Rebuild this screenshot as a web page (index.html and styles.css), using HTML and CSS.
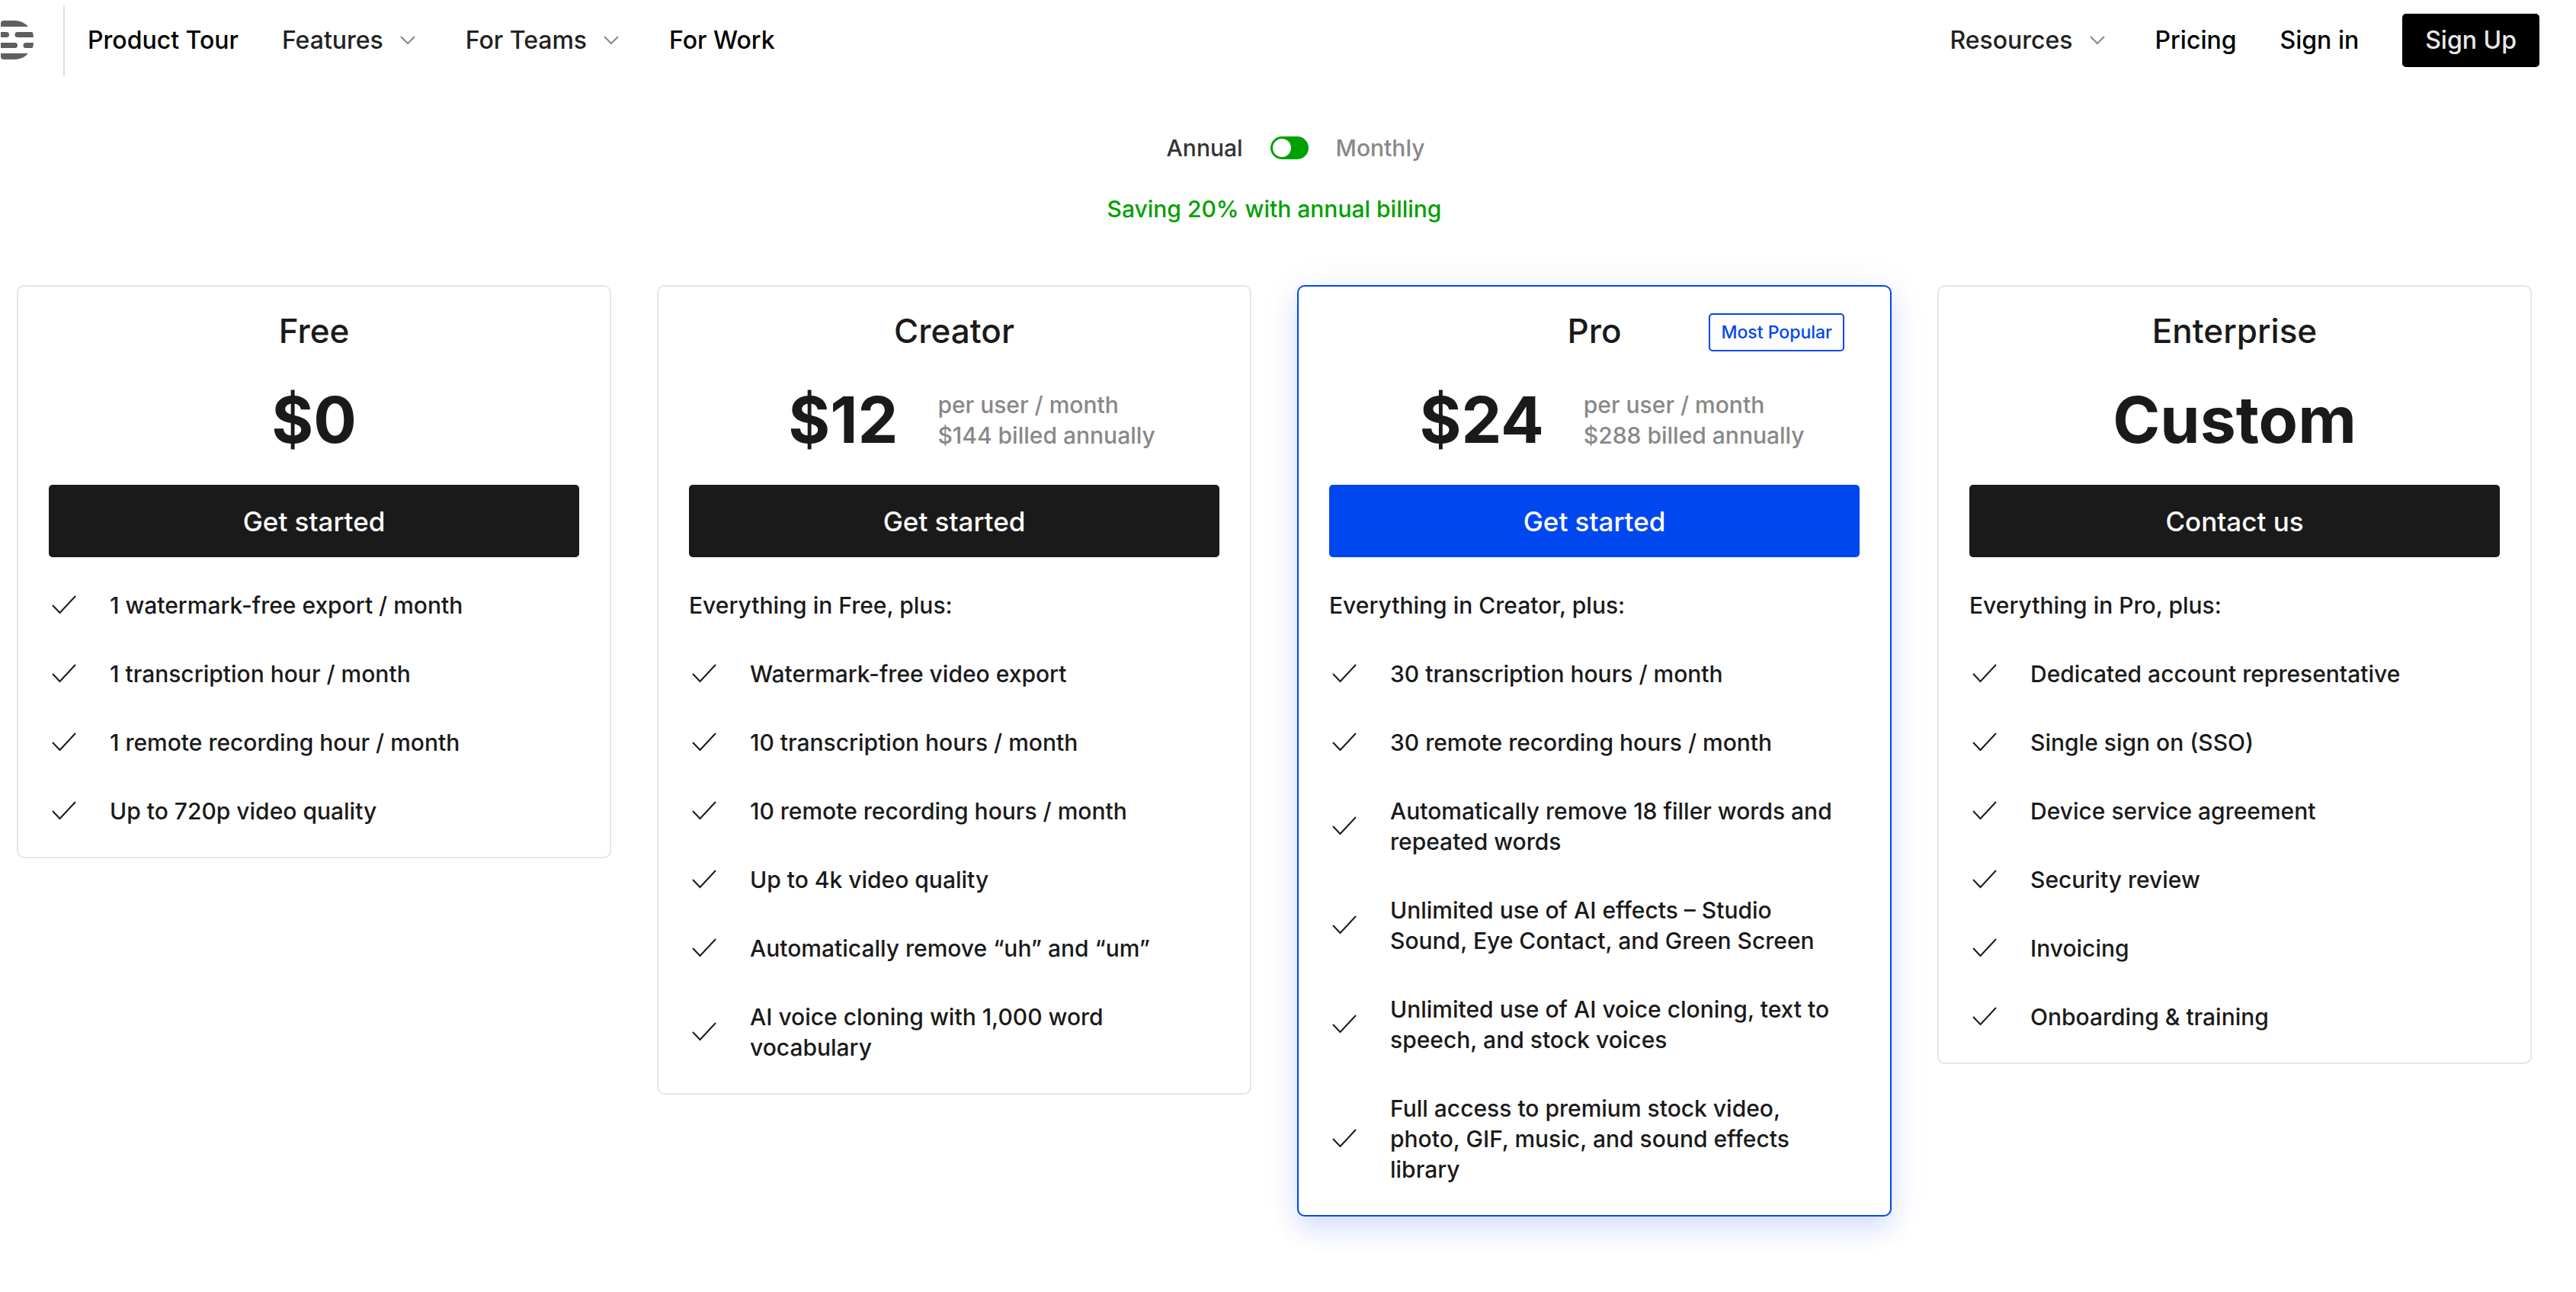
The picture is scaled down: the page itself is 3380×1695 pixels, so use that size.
FILE: index.html
```html
<!DOCTYPE html>
<html lang="en">
<head>
    <meta charset="UTF-8">
    <meta name="viewport" content="width=device-width, initial-scale=1.0">
    <title>Pricing</title>
    <link rel="stylesheet" href="styles.css">
</head>
<body>
    <!-- shared icons -->
    <svg class="sprite" aria-hidden="true">
        <symbol id="check" viewBox="0 0 40 40">
            <path d="M5 20L14.500 30L35 8" fill="none" stroke="currentColor" stroke-width="2"/>
        </symbol>
        <symbol id="chevron" viewBox="0 0 20 12">
            <path d="M1 1L10 10L19 1" fill="none" stroke="currentColor" stroke-width="2"/>
        </symbol>
    </svg>

    <header class="header">
        <a href="#" class="logo" aria-label="Home">
            <svg width="44" height="52" viewBox="0 0 44 52" fill="#5f5f5f">
                <path d="M1 8V4Q1 0 5 0H19Q30 0 37 8Z"/>
                <path d="M1 15H8.500A3.500 3.500 0 0 1 8.500 22H1Z"/>
                <path d="M23 15H42.500Q44 18 44 22H23A3.500 3.500 0 0 1 23 15Z"/>
                <path d="M1 29H19.500A3.500 3.500 0 0 1 19.500 36H1Z"/>
                <path d="M34 29H44Q44 33 42.500 36H34A3.500 3.500 0 0 1 34 29Z"/>
                <path d="M1 43H37Q30 51 19 51H5Q1 51 1 47Z"/>
            </svg>
        </a>
        <nav class="nav nav-main">
            <a href="#">Product Tour</a>
            <button type="button">Features <svg class="chevron"><use href="#chevron"/></svg></button>
            <button type="button">For Teams <svg class="chevron"><use href="#chevron"/></svg></button>
            <a href="#">For Work</a>
        </nav>
        <nav class="nav">
            <button type="button">Resources <svg class="chevron"><use href="#chevron"/></svg></button>
            <a href="#">Pricing</a>
            <a href="#">Sign in</a>
            <a href="#" class="sign-up">Sign Up</a>
        </nav>
    </header>

    <main class="pricing">
        <div class="billing">
            <label for="billing-toggle">Annual</label>
            <input type="checkbox" id="billing-toggle" class="toggle" role="switch">
            <label for="billing-toggle" class="muted">Monthly</label>
        </div>
        <p class="saving">Saving 20% with annual billing</p>

        <div class="plans">
            <section class="plan">
                <h2>Free</h2>
                <div class="price"><strong>$0</strong></div>
                <button type="button" class="btn">Get started</button>
                <ul class="features">
                    <li><svg class="check"><use href="#check"/></svg><span>1 watermark-free export / month</span></li>
                    <li><svg class="check"><use href="#check"/></svg><span>1 transcription hour / month</span></li>
                    <li><svg class="check"><use href="#check"/></svg><span>1 remote recording hour / month</span></li>
                    <li><svg class="check"><use href="#check"/></svg><span>Up to 720p video quality</span></li>
                </ul>
            </section>

            <section class="plan">
                <h2>Creator</h2>
                <div class="price with-note">
                    <strong>$12</strong>
                    <p>per user / month<br>$144 billed annually</p>
                </div>
                <button type="button" class="btn">Get started</button>
                <ul class="features">
                    <li>Everything in Free, plus:</li>
                    <li><svg class="check"><use href="#check"/></svg><span>Watermark-free video export</span></li>
                    <li><svg class="check"><use href="#check"/></svg><span>10 transcription hours / month</span></li>
                    <li><svg class="check"><use href="#check"/></svg><span>10 remote recording hours / month</span></li>
                    <li><svg class="check"><use href="#check"/></svg><span>Up to 4k video quality</span></li>
                    <li><svg class="check"><use href="#check"/></svg><span>Automatically remove “uh” and “um”</span></li>
                    <li><svg class="check"><use href="#check"/></svg><span>AI voice cloning with 1,000 word vocabulary</span></li>
                </ul>
            </section>

            <section class="plan popular">
                <h2>Pro</h2>
                <span class="badge">Most Popular</span>
                <div class="price with-note">
                    <strong>$24</strong>
                    <p>per user / month<br>$288 billed annually</p>
                </div>
                <button type="button" class="btn">Get started</button>
                <ul class="features">
                    <li>Everything in Creator, plus:</li>
                    <li><svg class="check"><use href="#check"/></svg><span>30 transcription hours / month</span></li>
                    <li><svg class="check"><use href="#check"/></svg><span>30 remote recording hours / month</span></li>
                    <li><svg class="check"><use href="#check"/></svg><span>Automatically remove 18 filler words and repeated words</span></li>
                    <li><svg class="check"><use href="#check"/></svg><span>Unlimited use of AI effects – Studio Sound, Eye Contact, and Green Screen</span></li>
                    <li><svg class="check"><use href="#check"/></svg><span>Unlimited use of AI voice cloning, text to speech, and stock voices</span></li>
                    <li><svg class="check"><use href="#check"/></svg><span>Full access to premium stock video, photo, GIF, music, and sound effects library</span></li>
                </ul>
            </section>

            <section class="plan">
                <h2>Enterprise</h2>
                <div class="price"><strong>Custom</strong></div>
                <button type="button" class="btn">Contact us</button>
                <ul class="features">
                    <li>Everything in Pro, plus:</li>
                    <li><svg class="check"><use href="#check"/></svg><span>Dedicated account representative</span></li>
                    <li><svg class="check"><use href="#check"/></svg><span>Single sign on (SSO)</span></li>
                    <li><svg class="check"><use href="#check"/></svg><span>Device service agreement</span></li>
                    <li><svg class="check"><use href="#check"/></svg><span>Security review</span></li>
                    <li><svg class="check"><use href="#check"/></svg><span>Invoicing</span></li>
                    <li><svg class="check"><use href="#check"/></svg><span>Onboarding &amp; training</span></li>
                </ul>
            </section>
        </div>
    </main>
</body>
</html>
```
FILE: styles.css
```css
* {
    margin: 0;
    padding: 0;
    box-sizing: border-box;
}

body {
    font-family: Inter, "Liberation Sans", sans-serif;
    font-size: 30px;
    font-weight: 500;
    line-height: 40px;
    color: #1a1a1a;
    background: #fff;
}

a {
    color: inherit;
    text-decoration: none;
}

button {
    font: inherit;
    border: none;
    background: none;
    cursor: pointer;
}

.sprite {
    display: none;
}

/* header */
.header {
    display: flex;
    align-items: center;
    height: 106px;
    padding-right: 48px;
}

.logo {
    display: flex;
    align-items: center;
    height: 93px;
    padding-right: 39px;
    border-right: 2px solid #ddd;
}

.nav {
    display: flex;
    align-items: center;
    gap: 57px;
    font-size: 32px;
    color: #000;
}

.nav-main {
    flex: 1;
    padding-left: 30px;
}

.nav button {
    display: flex;
    align-items: center;
    padding-right: 9px;
    color: #222;
}

.chevron {
    width: 20px;
    height: 12px;
    margin-left: 22px;
    color: #888;
}

.sign-up {
    padding: 15px 30px;
    border-radius: 5px;
    background: #000;
    color: #e8e8e8;
}

/* billing period */
.pricing {
    padding: 68px 58px 80px 22px;
}

.billing {
    display: flex;
    justify-content: center;
    align-items: center;
    gap: 36px;
    padding-left: 56px;
    color: #333;
}

.muted {
    color: #888;
}

.toggle {
    appearance: none;
    width: 50px;
    height: 30px;
    padding: 3px;
    border-radius: 15px;
    background: #00a000;
    cursor: pointer;
}

.toggle::before {
    content: "";
    display: block;
    width: 24px;
    height: 24px;
    border-radius: 50%;
    background: #fff;
}

.toggle:checked::before {
    margin-left: auto;
}

.saving {
    margin: 40px 0 80px;
    text-align: center;
    color: #00a000;
}

/* plans */
.plans {
    display: grid;
    grid-template-columns: repeat(4, 1fr);
    align-items: start;
    gap: 60px;
}

.plan {
    position: relative;
    padding: 28px 40px 40px;
    border: 2px solid #e5e5e5;
    border-radius: 10px;
    background: #fff;
}

.plan h2 {
    font-size: 44px;
    font-weight: 500;
    line-height: 60px;
    text-align: center;
}

.price {
    display: flex;
    justify-content: center;
    height: 80px;
    margin: 47px 0 45px;
}

.price strong {
    font-size: 84px;
    font-weight: 700;
    line-height: 80px;
}

.price p {
    color: #888;
}

.with-note {
    gap: 52px;
    padding-left: 46px;
}

.btn {
    display: block;
    width: 100%;
    height: 95px;
    border-radius: 5px;
    background: #1a1a1a;
    color: #fff;
    font-size: 35px;
}

.features {
    display: grid;
    gap: 50px;
    margin-top: 43px;
    list-style: none;
}

.features li {
    display: flex;
    align-items: center;
    gap: 40px;
}

.features span {
    padding-right: 24px;
}

.check {
    flex: none;
    width: 40px;
    height: 40px;
}

.popular {
    border-color: #0047f0;
    box-shadow: 0 16px 32px rgba(0, 71, 240, 0.14), 0 4px 60px rgba(0, 71, 240, 0.06);
}

.popular .btn {
    background: #0047f0;
}

.badge {
    position: absolute;
    top: 35px;
    right: 60px;
    padding: 3px 14px;
    border: 2px solid #0047f0;
    border-radius: 5px;
    color: #0047f0;
    font-size: 23px;
}
```
